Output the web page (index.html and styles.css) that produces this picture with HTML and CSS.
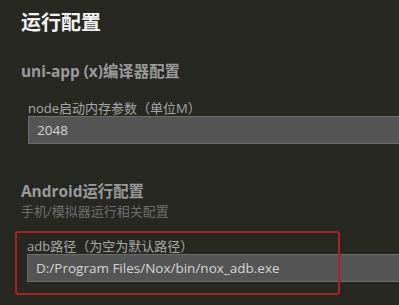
FILE: index.html
```html
<!DOCTYPE html>
<html lang="zh-CN">
<head>
    <meta charset="UTF-8">
    <meta name="viewport" content="width=device-width, initial-scale=1.0">
    <title>运行配置</title>
    <link rel="stylesheet" href="styles.css">
</head>
<body>
    <div class="settings-page">
        <h1 class="page-title">运行配置</h1>

        <div class="section">
            <div class="section-header">uni-app (x)编译器配置</div>
            <div class="form-item first">
                <label class="item-label" for="nodeMemory">node启动内存参数（单位M）</label>
                <input class="item-input" type="text" id="nodeMemory" value="2048">
            </div>
        </div>

        <div class="section">
            <div class="section-header">Android运行配置</div>
            <div class="section-desc">手机/模拟器运行相关配置</div>
            <div class="form-item highlighted">
                <label class="item-label" for="adbPath">adb路径（为空为默认路径）</label>
                <input class="item-input" type="text" id="adbPath" value="D:/Program Files/Nox/bin/nox_adb.exe">
                <div class="highlight-box"></div>
            </div>
        </div>
    </div>
</body>
</html>
```

FILE: styles.css
```css
body, html {
    margin: 0;
    height: 100%;
    background-color: #272822;
    overflow: hidden;
    font-family: 'Open Sans', 'Noto Sans CJK SC', sans-serif;
}
.settings-page {
    padding-left: 21px;
}
.page-title {
    margin: 9px 0 0;
    font-size: 20px;
    line-height: 28px;
    font-weight: bold;
    color: #f5f5f5;
}
.section-header {
    font-size: 15.4px;
    line-height: 20px;
    font-weight: bold;
    color: #9a9a9a;
}
.section:first-of-type .section-header {
    margin-top: 25px;
}
.section + .section .section-header {
    margin-top: 38px;
}
.section-desc {
    font-size: 13px;
    line-height: 18px;
    color: #6f6f6f;
}
.form-item {
    position: relative;
    padding-left: 6px;
}
.form-item.first {
    margin-top: 18px;
    padding-left: 7px;
}
.form-item.highlighted {
    margin-top: 18px;
}
.item-label {
    display: block;
    font-size: 13px;
    line-height: 16px;
    color: #a8a8a8;
}
.item-input {
    display: block;
    box-sizing: border-box;
    width: 100%;
    height: 28px;
    margin: 0;
    padding: 0 8px;
    background-color: #555555;
    border: 1px solid #6c6c6c;
    border-right-width: 0;
    color: #d4d4d4;
    font-family: 'Open Sans', 'Noto Sans CJK SC', sans-serif;
    font-size: 13.5px;
    outline: none;
}
.highlight-box {
    position: absolute;
    left: -6px;
    top: -7px;
    width: 325px;
    height: 64px;
    box-sizing: border-box;
    border: 2px solid #a82323;
    border-radius: 3px;
    pointer-events: none;
}
```
